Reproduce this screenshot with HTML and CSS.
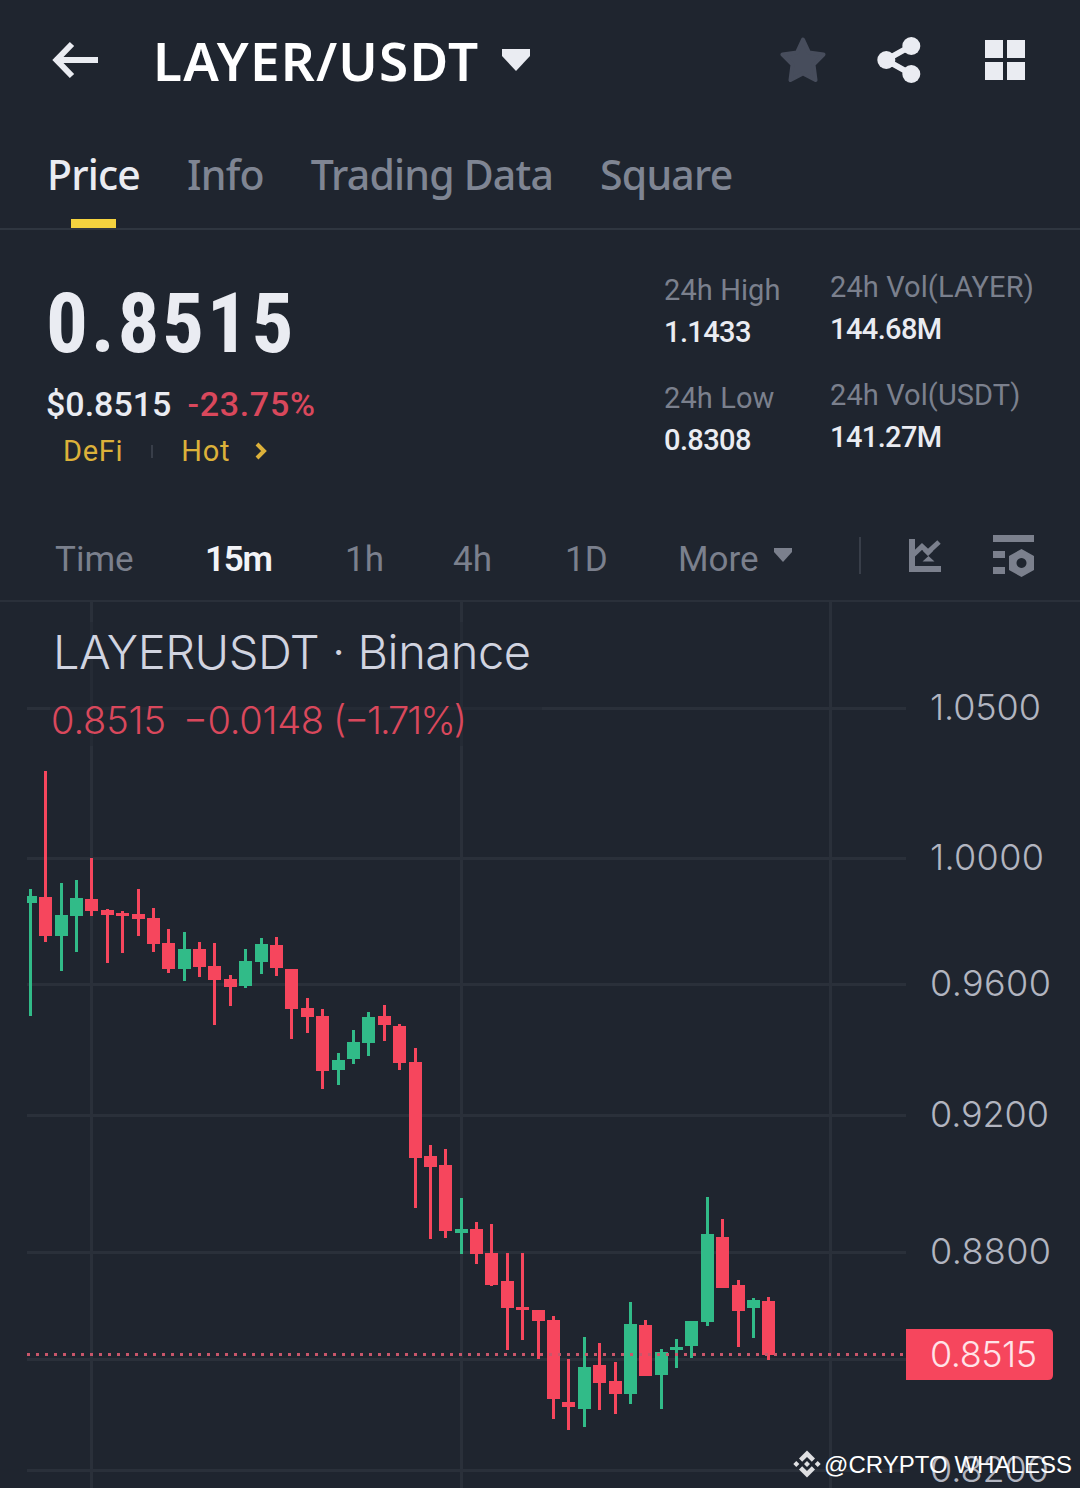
FILE: index.html
```html
<!DOCTYPE html>
<html lang="en">
  <head>
    <meta charset="UTF-8">
    <title>LAYER/USDT</title>
    <link rel="stylesheet" href="styles.css">
  </head>

  <body>

    <header class="topbar">
      <svg class="back" width="46" height="38" viewBox="0 0 46 38">
        <path d="M20 3 L4.5 19 L20 35 M5 19 H46" fill="none" stroke="#eaecf2" stroke-width="6"/>
      </svg>
      <h1>LAYER/USDT</h1>
      <svg class="caret" width="28" height="22" viewBox="0 0 28 22">
        <path d="M0 0 H28 V7 L14 22 L0 7 Z" fill="#eaecf2"/>
      </svg>
      <svg class="star" width="46" height="46" viewBox="0 0 46 46">
        <path d="M23 2.500 L29 15.500 L43.500 17.500 L33.500 27.500 L35.500 43 L23 36.500 L10.500 43 L12.500 27.500 L2.500 17.500 L17 15.500 Z" fill="#474d5c" stroke="#474d5c" stroke-width="4" stroke-linejoin="round"/>
      </svg>
      <svg class="share" width="44" height="46" viewBox="0 0 44 46">
        <path d="M34 9 L9 23 L34 37" fill="none" stroke="#eaecf2" stroke-width="6"/>
        <circle cx="34.300" cy="9" r="9" fill="#eaecf2"/>
        <circle cx="9.300" cy="23" r="9" fill="#eaecf2"/>
        <circle cx="34.300" cy="37" r="9" fill="#eaecf2"/>
      </svg>
      <svg class="apps" width="40" height="40" viewBox="0 0 40 40">
        <path d="M0 0h18v18H0z M22 0h18v18H22z M0 22h18v18H0z M22 22h18v18H22z" fill="#eaecf2"/>
      </svg>
    </header>

    <nav class="tabs">
      <a class="tab active">Price</a>
      <a class="tab">Info</a>
      <a class="tab">Trading Data</a>
      <a class="tab">Square</a>
    </nav>

    <section class="summary">
      <div class="price">
        <div class="last">0.8515</div>
        <div class="change"><span>$0.8515</span><span class="down">-23.75%</span></div>
        <div class="tags">
          <span>DeFi</span>
          <i class="sep"></i>
          <span>Hot</span>
          <svg width="12" height="18" viewBox="0 0 12 18">
            <path d="M2 2 L9 9 L2 16" fill="none" stroke="#dcb13a" stroke-width="4"/>
          </svg>
        </div>
      </div>
      <dl class="stats">
        <dt>24h High</dt>
        <dd>1.1433</dd>
        <dt>24h Low</dt>
        <dd>0.8308</dd>
      </dl>
      <dl class="stats volume">
        <dt>24h Vol(LAYER)</dt>
        <dd>144.68M</dd>
        <dt>24h Vol(USDT)</dt>
        <dd>141.27M</dd>
      </dl>
    </section>

    <div class="intervals">
      <span>Time</span>
      <span class="active">15m</span>
      <span>1h</span>
      <span>4h</span>
      <span>1D</span>
      <span>More
        <svg class="caret" width="18" height="14" viewBox="0 0 18 14">
          <path d="M0 0 H18 V4 L9 14 L0 4 Z" fill="#7b808d"/>
        </svg>
      </span>
      <i class="sep"></i>
      <svg width="33" height="33" viewBox="0 0 33 33">
        <path d="M0 0 H6 V27 H32 V33 H0 Z" fill="#7b808d"/>
        <path d="M3 17 L13 7.500 L19 13 L30 3" fill="none" stroke="#7b808d" stroke-width="5"/>
        <path d="M13.500 22.500 H25.500 L19.500 17 Z M14 12 H24 L19 17 Z" fill="#7b808d"/>
      </svg>
      <svg class="settings" width="42" height="43" viewBox="0 0 42 43">
        <path d="M0 0h41v7H0z M0 16h12v7H0z M0 32h12v7H0z" fill="#7b808d"/>
        <path d="M28.500 14 L41 21 V35 L28.500 42 L16 35 V21 Z M28.500 23 a5 5 0 1 0 0.010 0 Z" fill="#7b808d" fill-rule="evenodd"/>
      </svg>
    </div>

    <svg id="chart" class="chart" width="1080" height="886" viewBox="0 602 1080 886">
      <g id="grid"></g>
      <rect class="legend-bg" x="50" y="622" width="492" height="124"/>
      <text class="symbol" x="53" y="669" textLength="478">LAYERUSDT · Binance</text>
      <text class="delta" x="51" y="734" textLength="115">0.8515</text>
      <text class="delta" x="183" y="734" textLength="141">−0.0148</text>
      <text class="delta" x="333" y="734" textLength="134">(−1.71%)</text>
      <g id="candles"></g>
      <line class="last-line" x1="27" y1="1354.5" x2="905" y2="1354.5"/>
      <g id="axis"></g>
      <path class="last-tag" d="M906 1329 H1048 Q1053 1329 1053 1334 V1375 Q1053 1380 1048 1380 H906 Z"/>
      <text class="last-text" x="930" y="1367" textLength="107">0.8515</text>
      <g class="mark">
        <path d="M807 1450.500 l8 8 -3.200 3.200 -4.800 -4.800 -4.800 4.800 -3.200 -3.200z M807 1477.500 l8 -8 -3.200 -3.200 -4.800 4.800 -4.800 -4.800 -3.200 3.200z M807 1461 l3 3 -3 3 -3 -3z M796.300 1461 l3 3 -3 3 -3 -3z M817.700 1461 l3 3 -3 3 -3 -3z"/>
        <text x="824" y="1473" textLength="248">@CRYPTO WHALESS</text>
      </g>
    </svg>

<script type="text/javascript">

  // wick top, body top, body bottom, wick bottom
  var velas = [
    ['g', 889, 896, 903, 1016], ['r', 771, 897, 936, 942], ['g', 883, 915, 936, 971],
    ['g', 880, 898, 916, 952], ['r', 858, 899, 911, 916], ['r', 909, 910, 915, 963],
    ['r', 911, 913, 916, 953], ['r', 889, 914, 919, 936], ['r', 908, 918, 944, 952],
    ['r', 929, 943, 969, 973], ['g', 932, 949, 969, 981], ['r', 942, 949, 967, 977],
    ['r', 943, 966, 980, 1025], ['r', 975, 979, 987, 1006], ['g', 949, 961, 986, 988],
    ['g', 938, 944, 962, 974], ['r', 937, 945, 968, 976], ['r', 969, 969, 1009, 1039],
    ['r', 998, 1008, 1017, 1033], ['r', 1009, 1016, 1071, 1089], ['g', 1053, 1060, 1070, 1085],
    ['g', 1030, 1042, 1059, 1064], ['g', 1012, 1017, 1043, 1056], ['r', 1005, 1016, 1025, 1041],
    ['r', 1024, 1026, 1063, 1070], ['r', 1048, 1062, 1158, 1208], ['r', 1145, 1156, 1167, 1239],
    ['r', 1149, 1165, 1231, 1238], ['g', 1198, 1229, 1233, 1254], ['r', 1222, 1229, 1254, 1264],
    ['r', 1224, 1253, 1285, 1286], ['r', 1253, 1281, 1308, 1350], ['r', 1253, 1307, 1310, 1340],
    ['r', 1310, 1310, 1321, 1359], ['r', 1316, 1320, 1399, 1419], ['r', 1359, 1402, 1407, 1430],
    ['g', 1337, 1367, 1409, 1427], ['r', 1343, 1365, 1383, 1410], ['r', 1362, 1381, 1394, 1414],
    ['g', 1302, 1324, 1394, 1404], ['r', 1320, 1325, 1376, 1376], ['g', 1349, 1352, 1375, 1409],
    ['g', 1339, 1347, 1350, 1368], ['g', 1321, 1321, 1346, 1358], ['g', 1197, 1234, 1322, 1326],
    ['r', 1219, 1237, 1288, 1288], ['r', 1280, 1285, 1311, 1347], ['g', 1298, 1300, 1308, 1338],
    ['r', 1297, 1301, 1355, 1360]
  ];

  // label, grid line, baseline of the text, width
  var precios = [
    ['1.0500', 707, 720, 111], ['1.0000', 857, 870, 114], ['0.9600', 983, 996, 121],
    ['0.9200', 1114, 1127, 119], ['0.8800', 1251, 1264, 121], ['', 1358, 0, 0], ['0.8200', 1469, 1482, 119]
  ];

  function rect(x, y, w, h, clase) {
    return '<rect class="' + clase + '" x="' + x + '" y="' + y + '" width="' + w + '" height="' + h + '"/>';
  }

  var grid = '';
  var axis = '';
  precios.forEach(function (p) {
    grid += rect(27, p[1], 879, 3, 'line');
    if (p[0]) {
      axis += '<text x="930" y="' + p[2] + '" textLength="' + p[3] + '">' + p[0] + '</text>';
    }
  });
  [90, 460, 829].forEach(function (x) {
    grid += rect(x, 602, 3, 886, 'line');
  });

  var candles = '';
  velas.forEach(function (v, i) {
    var x = Math.floor(30.36 + i * 15.386);
    var izq = Math.max(x - 6, 27);
    candles += rect(x - 1, v[1], 3, v[4] - v[1], v[0]);
    candles += rect(izq, v[2], x + 7 - izq, v[3] - v[2], v[0]);
  });

  document.getElementById('grid').innerHTML = grid;
  document.getElementById('axis').innerHTML = axis;
  document.getElementById('candles').innerHTML = candles;

</script>

  </body>
</html>
```

FILE: styles.css
```css
body {
  margin: 0;
  width: 1080px;
  height: 1488px;
  overflow: hidden;
  background: #1f252f;
  color: #eaecf2;
  font-family: Roboto, "Liberation Sans", sans-serif;
}

svg {
  display: block;
  flex: none;
}

/* top bar */
.topbar {
  display: flex;
  align-items: center;
  height: 120px;
  padding: 0 55px 0 52px;
}

.topbar h1 {
  margin: 0 0 0 55px;
  padding-top: 2px;
  font-family: "Noto Sans", sans-serif;
  font-size: 53px;
  font-weight: 600;
  line-height: 80px;
  letter-spacing: 1.2px;
  color: #fff;
}

.topbar .caret {
  margin-left: 23px;
}

.star {
  margin-left: auto;
}

.share {
  margin: 0 64px 0 51px;
}

/* tabs */
.tabs {
  display: flex;
  gap: 47px;
  height: 108px;
  padding-left: 47px;
  border-bottom: 2px solid #2f3640;
  font-family: "Noto Sans", sans-serif;
  font-size: 41px;
  font-weight: 500;
  line-height: 108px;
  letter-spacing: -0.8px;
  color: #7f8593;
}

.tab.active {
  position: relative;
  color: #eaecf2;
}

.tab.active::after {
  content: "";
  position: absolute;
  left: 24px;
  bottom: 0;
  width: 45px;
  height: 9px;
  background: #f5d33f;
}

/* price and 24h numbers */
.summary {
  display: flex;
  height: 280px;
}

.price {
  width: 618px;
  padding: 48px 0 0 46px;
  box-sizing: border-box;
  margin-right: 46px;
}

.last {
  font-size: 83px;
  font-weight: 700;
  font-stretch: 75%;
  line-height: 92px;
  letter-spacing: 2.7px;
}

.change {
  display: flex;
  gap: 16px;
  margin-top: 11px;
  font-size: 34px;
  font-weight: 500;
  line-height: 46px;
}

.down {
  letter-spacing: 0.7px;
  color: #d9485c;
}

.tags {
  display: flex;
  align-items: center;
  margin: 9px 0 0 17px;
  font-size: 29px;
  line-height: 30px;
  letter-spacing: 0.7px;
  color: #dcb13a;
}

.tags .sep {
  width: 2px;
  height: 13px;
  margin: 0 28px 0 28px;
  background: #383e49;
}

.tags svg {
  margin-left: 25px;
}

.stats {
  width: 166px;
  margin: 39px 0 0;
  font-size: 29px;
  line-height: 42px;
  white-space: nowrap;
}

.stats.volume {
  width: auto;
  margin-top: 36px;
}

.stats dt {
  letter-spacing: 0.1px;
  color: #7b808d;
}

.stats dd {
  margin: 0 0 24px;
  font-weight: 500;
  letter-spacing: -0.6px;
}

/* intervals */
.intervals {
  display: grid;
  grid-template-columns: 150px 140px 108px 112px 113px 181px 50px 84px auto;
  align-items: center;
  height: 90px;
  padding-left: 55px;
  border-bottom: 2px solid #2a303a;
  font-size: 35px;
  color: #7b808d;
}

.intervals span {
  display: flex;
  padding-top: 9px;
  line-height: 40px;
}

.intervals .active {
  font-weight: 600;
  letter-spacing: -1.2px;
  color: #f2f3f7;
}

.intervals .caret {
  margin: 8px 0 0 15px;
}

.intervals .sep {
  width: 2px;
  height: 37px;
  background: #383e49;
}

.settings {
  margin-top: 3px;
}

/* chart */
.chart text {
  font-family: Inter, "Liberation Sans", sans-serif;
  font-weight: 300;
}

.line {
  fill: #2a303a;
}

.legend-bg {
  fill: #1f252f;
  opacity: 0.5;
}

.chart .symbol {
  font-size: 47px;
  fill: #d1d4e0;
}

.chart .delta {
  font-size: 38px;
  fill: #d9485c;
}

#axis text {
  font-size: 36px;
  fill: #b2b5c0;
}

.r {
  fill: #f6465d;
}

.g {
  fill: #31bb88;
}

.last-line {
  stroke: #c9566a;
  stroke-width: 3;
  stroke-dasharray: 3 6;
}

.last-tag {
  fill: #f6465d;
}

.chart .last-text {
  font-size: 36px;
  fill: #ffe3e8;
}

.mark {
  fill: #dfe0e2;
}

.chart .mark text {
  font-family: "Liberation Sans", Arial, sans-serif;
  font-size: 24px;
  font-weight: 400;
  fill: #fff;
}
```
